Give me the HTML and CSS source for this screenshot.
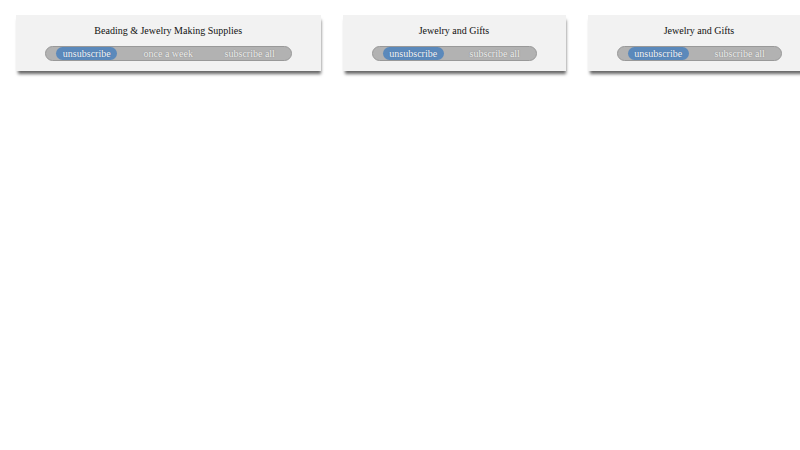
FILE: index.html
```html
<!DOCTYPE html>
<html>
<head>
<meta charset="utf-8">
<link rel="stylesheet" href="styles.css">
</head>
<body>
<div class="cards">
  <div class="card">
    <div class="title">Beading &amp; Jewelry Making Supplies</div>
    <div class="toggle">
      <div class="seg"><span class="opt active">unsubscribe</span></div>
      <div class="seg"><span class="opt">once a week</span></div>
      <div class="seg"><span class="opt">subscribe all</span></div>
    </div>
  </div>
  <div class="card">
    <div class="title">Jewelry and Gifts</div>
    <div class="toggle">
      <div class="seg"><span class="opt active">unsubscribe</span></div>
      <div class="seg"><span class="opt">subscribe all</span></div>
    </div>
  </div>
  <div class="card">
    <div class="title">Jewelry and Gifts</div>
    <div class="toggle">
      <div class="seg"><span class="opt active">unsubscribe</span></div>
      <div class="seg"><span class="opt">subscribe all</span></div>
    </div>
  </div>
</div>
</body>
</html>
```
FILE: styles.css
```css
html, body {
  margin: 0;
  padding: 0;
  background: #ffffff;
  overflow: hidden;
}
body {
  font-family: "Liberation Serif", "Times New Roman", serif;
  width: 800px;
  height: 450px;
}
.cards {
  display: flex;
  gap: 22px;
  padding: 15px 0 0 16px;
  width: max-content;
}
.card {
  flex: none;
  background: #f2f2f2;
  padding: 10px 29px 10px;
  box-shadow: 1px 4px 3px -1px rgba(0, 0, 0, 0.6);
}
.title {
  text-align: center;
  font-size: 10px;
  line-height: 12px;
  color: #111111;
  margin: 0 0 9px;
}
.toggle {
  display: flex;
  background: #b2b2b2;
  border: 1px solid #999999;
  border-radius: 8px;
  height: 13px;
}
.seg {
  width: 81.5px;
  display: flex;
  justify-content: center;
  align-items: stretch;
}
.opt {
  font-size: 10px;
  line-height: 13px;
  padding: 0 6.5px;
  color: #f0f0f0;
  text-shadow: 0 0 1px rgba(90, 90, 90, 0.7);
  border-radius: 7px;
  white-space: nowrap;
}
.opt.active {
  background: #5b89bb;
  color: #f4f7fb;
  text-shadow: 0 0 1px rgba(40, 70, 110, 0.6);
}
```
